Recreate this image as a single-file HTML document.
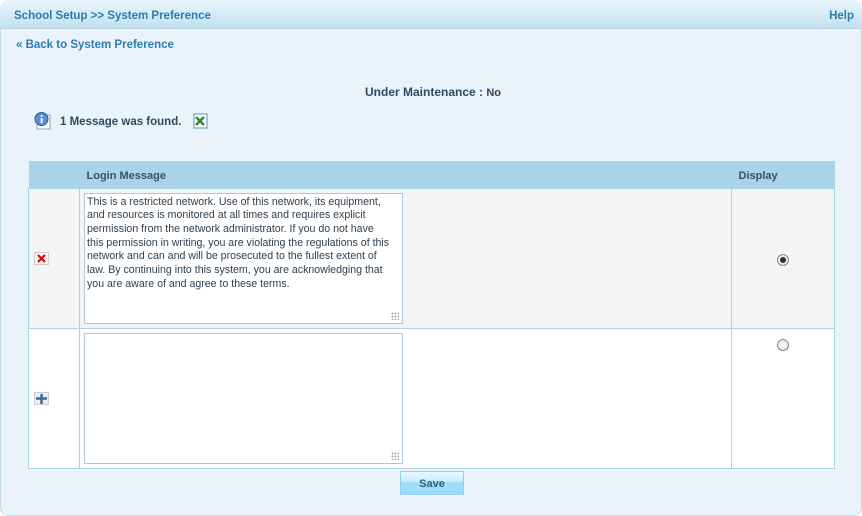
<!DOCTYPE html>
<html><head><style>
*{margin:0;padding:0;box-sizing:border-box}
body{width:862px;height:516px;background:#fff;font-family:"Liberation Sans",Arial,sans-serif;position:relative;overflow:hidden}
.page{position:absolute;left:0;top:0;width:862px;height:516px;background:#ebf3fa;border-radius:8px;border:1px solid #c4dbe8}
.hdr{position:absolute;left:-1px;top:-1px;width:862px;height:29px;background:linear-gradient(#e9f5fb,#c2e1f0);border-radius:8px 8px 0 0;border-bottom:1px solid #b8d6e6}
.hdr .t{position:absolute;left:14px;top:10px;font-size:11.5px;font-weight:bold;color:#2a7db0}
.hdr .h{position:absolute;right:8px;top:10px;font-size:11.5px;font-weight:bold;color:#2a7db0}
.back{position:absolute;left:15px;top:38px;font-size:11.5px;font-weight:bold;color:#2a7db0}
.um{position:absolute;left:364px;top:84px;font-size:12px;font-weight:bold;color:#2f4a60}
.um span{font-size:11px}
.msg{position:absolute;left:59px;top:115px;font-size:11.5px;font-weight:bold;color:#2f4a60}
table{position:absolute;left:27px;top:160px;width:807px;border-collapse:collapse}
th{background:#a9d4e8;height:27px;font-size:11px;color:#3a5066;text-align:left;font-weight:bold;padding-left:7px;padding-top:3px}
td{border:1px solid #a9d4e8;vertical-align:top}
.ta{width:319px;height:131px;border:1px solid #b0c8d8;background:#fff;margin:4px 0 0 4px;font-size:10.6px;line-height:13.7px;color:#2f4050;padding:2px 9px 0 2px;position:relative}
.grip{position:absolute;right:3px;bottom:3px;width:8px;height:8px;background:radial-gradient(circle,#aaa 0.8px,transparent 1px) 0 0/3px 3px}
.radio{width:12px;height:12px;border-radius:50%;border:1px solid #888;background:radial-gradient(#fff,#ddd);position:absolute}
.btn{position:absolute;left:399px;top:470px;width:64px;height:24px;border:1px solid #8fd2f2;background:linear-gradient(#e8f7ff 0%,#c9ecfc 45%,#9fdefc 46%,#9ddcfa 100%);font-size:11px;font-weight:bold;color:#2b5f82;text-align:center;line-height:24px}
</style></head><body>
<div class="page">
<div class="hdr"><div class="t">School Setup &gt;&gt; System Preference</div><div class="h">Help</div></div>
<div class="back">« Back to System Preference</div>
<div class="um">Under Maintenance : <span>No</span></div>
<svg style="position:absolute;left:33px;top:110px" width="17" height="19"><rect x="3" y="4" width="13" height="14" fill="#fff" stroke="#8aa"/><circle cx="7.5" cy="8" r="6.5" fill="#5c8fcf" stroke="#2f5c9a"/><rect x="6.7" y="7" width="1.8" height="5" fill="#fff"/><rect x="6.7" y="4" width="1.8" height="1.8" fill="#fff"/></svg>
<div class="msg">1 Message was found.</div>
<svg style="position:absolute;left:192px;top:112px" width="15" height="16"><rect x="1" y="1" width="13" height="14" fill="#fff" stroke="#5b8fb8"/><path d="M3 4l8 8M11 4l-8 8" stroke="#2e8a2e" stroke-width="2.5"/></svg>
<table>
<tr><th style="width:51px;padding:0"></th><th>Login Message</th><th style="width:103px">Display</th></tr>
<tr style="height:140px;background:#f4f4f4">
<td style="position:relative"><svg style="position:absolute;left:5px;top:63px" width="15" height="13"><rect x="0.5" y="0.5" width="14" height="12" fill="#f4f4f4" stroke="#ccc"/><path d="M4 3l7 7M11 3l-7 7" stroke="#d00" stroke-width="2"/></svg></td>
<td><div class="ta">This is a restricted network. Use of this network, its equipment, and resources is monitored at all times and requires explicit permission from the network administrator. If you do not have this permission in writing, you are violating the regulations of this network and can and will be prosecuted to the fullest extent of law. By continuing into this system, you are acknowledging that you are aware of and agree to these terms.<div class="grip"></div></div></td>
<td style="position:relative"><div class="radio" style="left:45px;top:65px"><div style="width:6px;height:6px;border-radius:50%;background:#234;margin:2px"></div></div></td>
</tr>
<tr style="height:140px;background:#fff">
<td style="position:relative"><svg style="position:absolute;left:5px;top:63px" width="15" height="13"><rect x="0.5" y="0.5" width="14" height="12" fill="#eee" stroke="#ccc"/><path d="M2 6.5h11M7.5 2v10" stroke="#3f6a94" stroke-width="2.5"/></svg></td>
<td><div class="ta"><div class="grip"></div></div></td>
<td style="position:relative"><div class="radio" style="left:45px;top:10px"></div></td>
</tr>
</table>
<div class="btn">Save</div>
</div>
</body></html>
